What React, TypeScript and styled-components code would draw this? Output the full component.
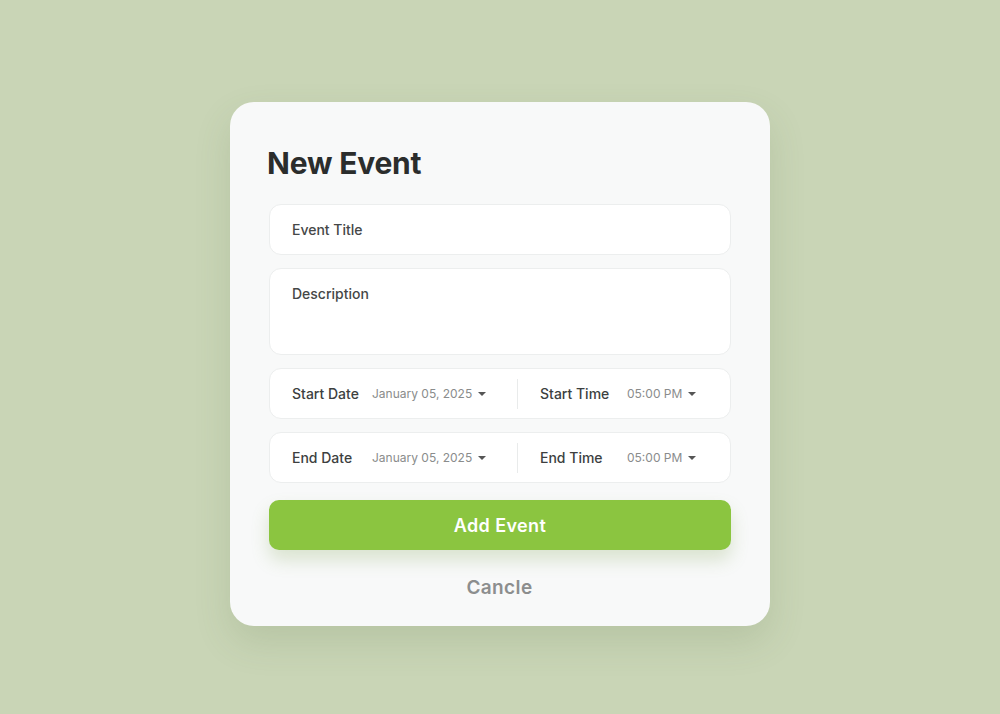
import React from "react";
import styled, { createGlobalStyle } from "styled-components";

const Global = createGlobalStyle`
  html, body { margin: 0; padding: 0; }
  body { background: #c9d5b6; font-family: "Inter", "Noto Sans", sans-serif; }
  * { box-sizing: border-box; }
`;

const Page = styled.div`
  width: 1000px;
  height: 714px;
  display: flex;
  justify-content: center;
  padding-top: 102px;
  background: #c9d5b6;
`;

const Card = styled.div`
  width: 540px;
  height: 524px;
  background: #f8f9f9;
  border-radius: 24px;
  box-shadow: 0 16px 36px rgba(90, 110, 70, 0.16);
  padding: 42px 39px 0 38px;
  display: flex;
  flex-direction: column;
`;

const Title = styled.h1`
  margin: 0 0 22px -1px;
  font-size: 30px;
  line-height: 38px;
  font-weight: 700;
  color: #2b2d2c;
  letter-spacing: -0.2px;
`;

const Fields = styled.div`
  display: flex;
  flex-direction: column;
  gap: 13px;
  margin-left: 1px;
`;

const Field = styled.div<{ $tall?: boolean }>`
  height: ${(p) => (p.$tall ? 87 : 51)}px;
  background: #ffffff;
  border: 1px solid #eceeee;
  border-radius: 12px;
  padding: ${(p) => (p.$tall ? "16px 22px" : "0 22px")};
  display: flex;
  align-items: ${(p) => (p.$tall ? "flex-start" : "center")};
  font-size: 14px;
  font-weight: 500;
  color: #454747;
`;

const SplitField = styled(Field)`
  display: grid;
  grid-template-columns: 247px 1px 1fr;
  padding: 0;
`;

const Half = styled.div`
  display: flex;
  align-items: center;
  padding-left: 22px;
`;

const Divider = styled.div`
  width: 1px;
  height: 30px;
  background: #e9ebeb;
  align-self: center;
`;

const Label = styled.span<{ $w: number }>`
  font-size: 14px;
  font-weight: 500;
  color: #3d3f3f;
  width: ${(p) => p.$w}px;
`;

const Value = styled.span`
  display: flex;
  align-items: center;
  gap: 6px;
  font-size: 12px;
  font-weight: 400;
  color: #8a8c8c;
`;

const Caret = styled.span`
  width: 0;
  height: 0;
  border-left: 4px solid transparent;
  border-right: 4px solid transparent;
  border-top: 4px solid #555;
`;

const Primary = styled.button`
  margin-top: 4px;
  height: 50px;
  width: 100%;
  border: none;
  border-radius: 10px;
  background: #8bc540;
  color: #fff;
  font-family: inherit;
  font-size: 18px;
  font-weight: 600;
  letter-spacing: 0.4px;
  box-shadow: 0 10px 18px rgba(110, 150, 60, 0.22);
`;

const Secondary = styled.button`
  margin-top: 26px;
  background: none;
  border: none;
  font-family: inherit;
  font-size: 19px;
  line-height: 23px;
  font-weight: 600;
  letter-spacing: 0.4px;
  color: #8c8e8e;
  align-self: center;
  padding: 0;
`;

const DateRow = ({ a, b }: { a: string; b: string }) => (
  <SplitField>
    <Half>
      <Label $w={80}>{a}</Label>
      <Value>
        January 05, 2025 <Caret />
      </Value>
    </Half>
    <Divider />
    <Half>
      <Label $w={87}>{b}</Label>
      <Value>
        05:00 PM <Caret />
      </Value>
    </Half>
  </SplitField>
);

export default function App() {
  return (
    <>
      <Global />
      <Page>
        <Card>
          <Title>New Event</Title>
          <Fields>
            <Field>Event Title</Field>
            <Field $tall>Description</Field>
            <DateRow a="Start Date" b="Start Time" />
            <DateRow a="End Date" b="End Time" />
            <Primary>Add Event</Primary>
          </Fields>
          <Secondary>Cancle</Secondary>
        </Card>
      </Page>
    </>
  );
}
